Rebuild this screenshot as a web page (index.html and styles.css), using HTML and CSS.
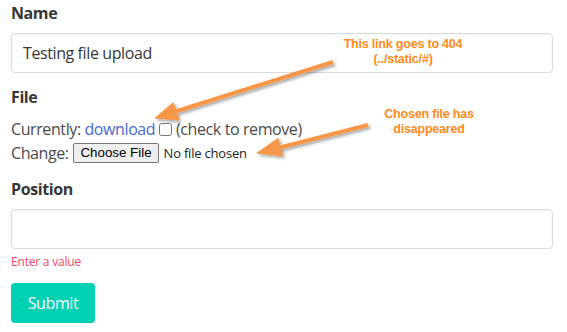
FILE: index.html
```html
<!DOCTYPE html>
<html lang="en">
<head>
<meta charset="utf-8">
<title>Form</title>
<link rel="stylesheet" href="styles.css">
</head>
<body>
<form class="form">
  <div class="field">
    <label class="label">Name</label>
    <div class="input">Testing file upload</div>
  </div>
  <div class="field">
    <label class="label">File</label>
    <div class="line">Currently: <a class="link" href="#">download</a><input class="check" type="checkbox"> (check to remove)</div>
    <div class="line">Change: <span class="choose">Choose File</span><span class="nofile">No file chosen</span></div>
  </div>
  <div class="field">
    <label class="label">Position</label>
    <div class="input"></div>
    <p class="help">Enter a value</p>
  </div>
  <div class="field">
    <span class="submit">Submit</span>
  </div>
</form>

<svg class="arrows" width="567" height="332" viewBox="0 0 567 332">
  <defs>
    <filter id="sh" x="-20%" y="-50%" width="140%" height="200%">
      <feDropShadow dx="2" dy="2" stdDeviation="1.5" flood-color="#000" flood-opacity="0.35"/>
    </filter>
  </defs>
  <g filter="url(#sh)" fill="#f79646" stroke="#f79646">
    <line x1="333" y1="62" x2="174" y2="112" stroke-width="4"/>
    <polygon points="155,118 178.7,120 173.3,102.8" stroke-width="1"/>
    <line x1="368" y1="125" x2="278" y2="148" stroke-width="4"/>
    <polygon points="257,153 282.5,155.8 278.1,138.4" stroke-width="1"/>
  </g>
</svg>
<div class="note note-1">This link goes to 404<br>(../static/#)</div>
<div class="note note-2">Chosen file has<br>disappeared</div>
</body>
</html>
```

FILE: styles.css
```css
html, body {
  margin: 0;
  padding: 0;
  background: #fff;
}
body {
  position: relative;
  width: 567px;
  height: 332px;
  overflow: hidden;
  font-family: "Open Sans", "Noto Sans", sans-serif;
  color: #4a4a4a;
  font-size: 16px;
  line-height: 1.5;
  letter-spacing: -0.4px;
}
.form {
  padding: 1px 14px 0 11px;
}
.field {
  margin-bottom: 12px;
}
.label {
  display: block;
  font-weight: 700;
  color: #363636;
  margin-bottom: 8px;
  line-height: 24px;
}
.input {
  box-sizing: border-box;
  height: 40px;
  border: 1px solid #dbdbdb;
  border-radius: 4px;
  box-shadow: inset 0 1px 2px rgba(10,10,10,.05);
  padding: 0 11px;
  display: flex;
  align-items: center;
  color: #363636;
  font-size: 16px;
}
.line {
  line-height: 24px;
  display: flex;
  align-items: center;
  white-space: pre;
}
.link {
  color: #4868d0;
  text-decoration: none;
}
.check {
  width: 13px;
  height: 13px;
  margin: 0 0 0 4px;
}
.choose {
  box-sizing: border-box;
  display: inline-block;
  font-family: "Liberation Sans", Arial, sans-serif;
  font-size: 13.33px;
  letter-spacing: 0;
  line-height: 18px;
  color: #000;
  background: #efefef;
  border: 1px solid #767676;
  border-radius: 2px;
  padding: 0 6px;
  margin-left: 1px;
}
.nofile {
  font-size: 13px;
  letter-spacing: -0.2px;
  color: #222;
  margin-left: 5px;
}
.help {
  margin: 4px 0 0;
  font-size: 12px;
  letter-spacing: -0.2px;
  line-height: 18px;
  color: #f14668;
}
.submit {
  box-sizing: border-box;
  display: inline-flex;
  align-items: center;
  justify-content: center;
  height: 40px;
  width: 84px;
  background: #00d1b2;
  color: #fff;
  border-radius: 4px;
  font-size: 16px;
}
.arrows {
  position: absolute;
  left: 0;
  top: 0;
  pointer-events: none;
}
.note {
  position: absolute;
  font-family: "Liberation Sans", Arial, sans-serif;
  font-weight: 700;
  font-size: 12.5px;
  letter-spacing: -0.2px;
  line-height: 15px;
  color: #ff8a1c;
  text-align: center;
}
.note-1 {
  left: 340px;
  top: 37px;
  width: 126px;
}
.note-2 {
  left: 378px;
  top: 107px;
  width: 102px;
}
```
